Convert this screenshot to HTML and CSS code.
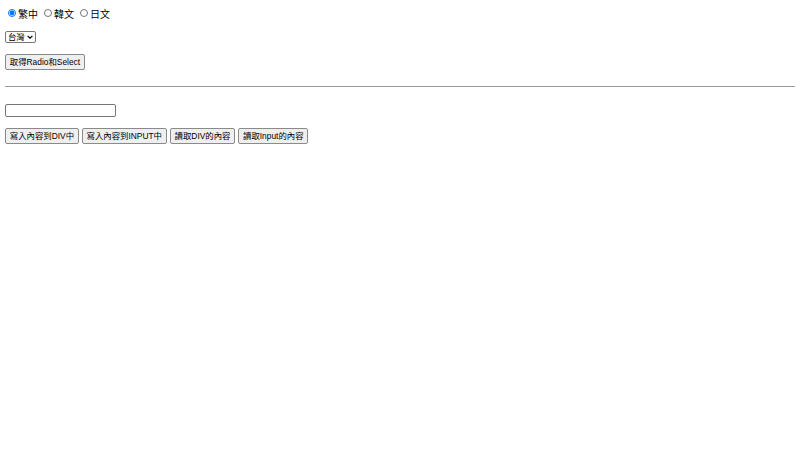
FILE: index.html
```html
<!DOCTYPE html>
<html lang="zh-Hant">
<head>
<meta charset="utf-8">
<title>Radio 與 Select</title>
<link rel="stylesheet" href="styles.css">
</head>
<body>
<div class="langs">
  <label class="opt"><input type="radio" name="lang" value="tw" checked>繁中</label>
  <label class="opt"><input type="radio" name="lang" value="kr">韓文</label>
  <label class="opt"><input type="radio" name="lang" value="jp">日文</label>
</div>
<div class="region">
  <div class="sel">
    <span class="sel-text">台灣</span>
    <svg class="chev" viewBox="0 0 10 6" width="6" height="4"><path d="M1 1 L5 5 L9 1" fill="none" stroke="#000" stroke-width="2"/></svg>
  </div>
</div>
<div class="actions">
  <button class="btn">取得Radio和Select</button>
</div>
<hr class="rule">
<div class="field">
  <input type="text" class="txt">
</div>
<div class="actions-row">
  <button class="btn">寫入內容到DIV中</button>
  <button class="btn">寫入內容到INPUT中</button>
  <button class="btn">讀取DIV的內容</button>
  <button class="btn">讀取Input的內容</button>
</div>
<div class="output"></div>
</body>
</html>
```
FILE: styles.css
```css
html {
  background: #fff;
}
body {
  margin: 5px;
  font-family: "Liberation Sans", "Noto Sans CJK TC", sans-serif;
  font-size: 10px;
  color: #000;
}
.langs {
  display: flex;
  align-items: center;
  height: 16px;
}
.opt {
  display: inline-flex;
  align-items: center;
  margin-right: 3px;
}
.opt input {
  margin: 0 2px 0 3px;
  width: 8px;
  height: 8px;
}
.region {
  margin-top: 10px;
  display: flex;
}
.sel {
  display: inline-flex;
  align-items: center;
  justify-content: space-between;
  white-space: nowrap;
  height: 12px;
  box-sizing: border-box;
  width: 31px;
  padding: 0 2px 0 2px;
  border: 1px solid #767676;
  border-radius: 2px;
  background: #fff;
  font-size: 8.4px;
  line-height: 1;
}
.chev {
  display: block;
  flex: none;
}
.actions {
  margin-top: 11px;
  display: flex;
}
.btn {
  appearance: none;
  font-family: "Liberation Sans", "Noto Sans CJK TC", sans-serif;
  font-size: 8.4px;
  height: 16px;
  box-sizing: border-box;
  padding: 0 3.8px;
  border: 1px solid #8a8a8a;
  border-radius: 2px;
  background: #efefef;
  color: #000;
  line-height: 1;
  white-space: nowrap;
}
.rule {
  margin: 16px 0 0;
  border: none;
  border-top: 1px solid #9b9b9b;
  height: 0;
}
.field {
  margin-top: 17px;
  display: flex;
}
.txt {
  appearance: none;
  width: 111px;
  height: 13px;
  box-sizing: border-box;
  border: 1px solid #767676;
  border-radius: 2px;
  padding: 0 2px;
  font-size: 8.4px;
  background: #fff;
}
.actions-row {
  margin-top: 11px;
  display: flex;
  gap: 3px;
}
```
